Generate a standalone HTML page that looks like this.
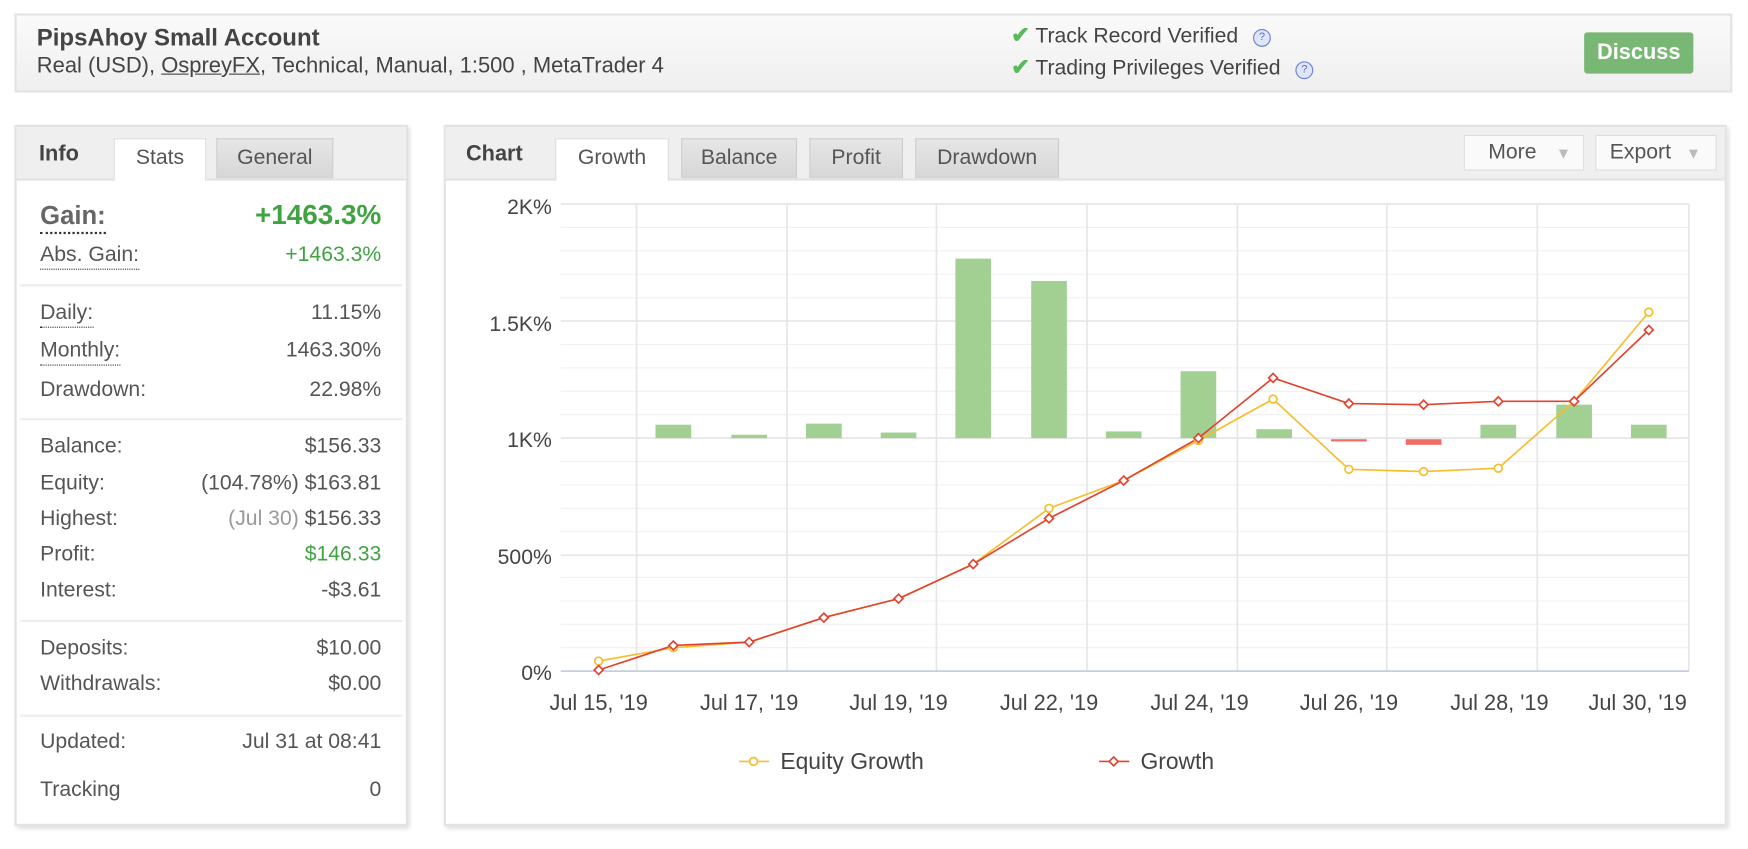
<!DOCTYPE html>
<html><head><meta charset="utf-8"><style>
html,body{margin:0;padding:0;background:#fff;overflow:hidden;}
body{width:1748px;height:849px;}
#w{position:absolute;left:0;top:0;width:1568px;height:762px;transform:scale(1.11480);transform-origin:0 0;font-family:"Liberation Sans",Arial,sans-serif;color:#444;}
.a{position:absolute;white-space:nowrap;}
.box{position:absolute;border:2px solid #e3e3e3;box-sizing:border-box;}
.tab{position:absolute;box-sizing:border-box;font-size:19px;text-align:center;line-height:34px;color:#555;}
.ti{background:#fff;border:1px solid #ddd;border-bottom:none;}
.tg{background:linear-gradient(#e6e6e6,#d6d6d6);border:1px solid #ccc;border-bottom:none;}
.row{position:absolute;left:36px;width:306px;font-size:19px;color:#555;}
.row .v{position:absolute;right:0;top:0;}
.dl{border-bottom:1px dotted #333;}
.sep{position:absolute;left:18px;width:343px;height:2px;background:#eee;}
.btn{position:absolute;box-sizing:border-box;border:1px solid #ddd;background:#fafafa;font-size:19px;color:#555;line-height:30px;}
.q{display:inline-block;width:14px;height:14px;border-radius:50%;border:1px solid #6a7fd0;color:#5a6fc0;font-size:10px;line-height:14px;text-align:center;vertical-align:2px;margin-left:8px;background:#dfe6fb}
</style></head><body><div id="w">

<div class="box" style="left:13px;top:12px;width:1541px;height:71px;background:linear-gradient(#fafafa,#efefef);"></div>
<div class="a" style="left:33px;top:22px;font-size:21.5px;font-weight:bold;color:#444;">PipsAhoy Small Account</div>
<div class="a" style="left:33px;top:48px;font-size:19.7px;color:#444;">Real (USD), <span style="text-decoration:underline">OspreyFX</span>, Technical, Manual, 1:500 , MetaTrader 4</div>
<div class="a" style="left:907px;top:19px;font-size:19px;color:#444;"><span style="color:#5cb85c;font-weight:bold;font-size:20px">✔</span> Track Record Verified <span class="q">?</span></div>
<div class="a" style="left:907px;top:48px;font-size:19px;color:#444;"><span style="color:#5cb85c;font-weight:bold;font-size:20px">✔</span> Trading Privileges Verified <span class="q">?</span></div>
<div class="a" style="left:1421px;top:29px;width:98px;height:37px;background:#78b874;border-radius:3px;color:#fff;font-weight:bold;font-size:19.5px;text-align:center;line-height:37px;">Discuss</div>

<!-- left panel -->
<div class="box" style="left:13px;top:112px;width:353px;height:629px;box-shadow:2px 2px 4px #ddd;"></div>
<div class="a" style="left:15px;top:114px;width:349px;height:46px;background:#efefef;border-bottom:2px solid #e3e3e3;"></div>
<div class="a" style="left:35px;top:127px;font-size:19.5px;font-weight:bold;color:#444;">Info</div>
<div class="tab ti" style="left:102px;top:124px;width:83px;height:38px;">Stats</div>
<div class="tab tg" style="left:194px;top:124px;width:105px;height:36px;">General</div>

<div class="row" style="top:180px;font-size:23px;font-weight:bold;color:#666;"><span class="dl" style="border-bottom-width:2px;padding-bottom:2px">Gain:</span><span class="v" style="color:#3fa342;font-size:25px;top:-1px">+1463.3%</span></div>
<div class="row" style="top:218px;"><span class="dl" style="padding-bottom:2px">Abs. Gain:</span><span class="v" style="color:#3fa342">+1463.3%</span></div>
<div class="sep" style="top:255px"></div>
<div class="row" style="top:270px;"><span class="dl" style="padding-bottom:2px">Daily:</span><span class="v">11.15%</span></div>
<div class="row" style="top:304px;"><span class="dl" style="padding-bottom:2px">Monthly:</span><span class="v">1463.30%</span></div>
<div class="row" style="top:339px;">Drawdown:<span class="v">22.98%</span></div>
<div class="sep" style="top:375px"></div>
<div class="row" style="top:390px;">Balance:<span class="v">$156.33</span></div>
<div class="row" style="top:423px;">Equity:<span class="v">(104.78%) $163.81</span></div>
<div class="row" style="top:455px;">Highest:<span class="v"><span style="color:#999">(Jul 30)</span> $156.33</span></div>
<div class="row" style="top:487px;">Profit:<span class="v" style="color:#3fa342">$146.33</span></div>
<div class="row" style="top:519px;">Interest:<span class="v">-$3.61</span></div>
<div class="sep" style="top:556px"></div>
<div class="row" style="top:571px;">Deposits:<span class="v">$10.00</span></div>
<div class="row" style="top:603px;">Withdrawals:<span class="v">$0.00</span></div>
<div class="sep" style="top:641px"></div>
<div class="row" style="top:655px;">Updated:<span class="v">Jul 31 at 08:41</span></div>
<div class="row" style="top:698px;">Tracking<span class="v">0</span></div>

<!-- chart panel -->
<div class="box" style="left:398px;top:112px;width:1151px;height:629px;box-shadow:2px 2px 4px #ddd;"></div>
<div class="a" style="left:400px;top:114px;width:1147px;height:46px;background:#efefef;border-bottom:2px solid #e3e3e3;"></div>
<div class="a" style="left:418px;top:127px;font-size:19.5px;font-weight:bold;color:#444;">Chart</div>
<div class="tab ti" style="left:498px;top:124px;width:102px;height:38px;">Growth</div>
<div class="tab tg" style="left:611px;top:124px;width:104px;height:36px;">Balance</div>
<div class="tab tg" style="left:726px;top:124px;width:84px;height:36px;">Profit</div>
<div class="tab tg" style="left:821px;top:124px;width:129px;height:36px;">Drawdown</div>
<div class="btn" style="left:1313px;top:121px;width:108px;height:32px;padding-left:21px;">More <span style="color:#bbb;font-size:14px;margin-left:12px">▼</span></div>
<div class="btn" style="left:1431px;top:121px;width:109px;height:32px;padding-left:12px;">Export <span style="color:#bbb;font-size:14px;margin-left:8px">▼</span></div>

<svg class="a" style="left:0;top:0" width="1568" height="762" font-family="Liberation Sans, Arial, sans-serif">
<g stroke="#f0f0f0" stroke-width="1">
<line x1="503" x2="1515" y1="204" y2="204"/><line x1="503" x2="1515" y1="225" y2="225"/><line x1="503" x2="1515" y1="246" y2="246"/><line x1="503" x2="1515" y1="267" y2="267"/>
<line x1="503" x2="1515" y1="309" y2="309"/><line x1="503" x2="1515" y1="330" y2="330"/><line x1="503" x2="1515" y1="351" y2="351"/><line x1="503" x2="1515" y1="372" y2="372"/>
<line x1="503" x2="1515" y1="414" y2="414"/><line x1="503" x2="1515" y1="435" y2="435"/><line x1="503" x2="1515" y1="456" y2="456"/><line x1="503" x2="1515" y1="477" y2="477"/>
<line x1="503" x2="1515" y1="518" y2="518"/><line x1="503" x2="1515" y1="539" y2="539"/><line x1="503" x2="1515" y1="560" y2="560"/><line x1="503" x2="1515" y1="581" y2="581"/>
</g>
<g stroke="#e6e6e6" stroke-width="1.5">
<line x1="503" x2="1515" y1="183" y2="183"/><line x1="503" x2="1515" y1="288" y2="288"/><line x1="503" x2="1515" y1="393" y2="393"/><line x1="503" x2="1515" y1="498" y2="498"/>
<line x1="571" x2="571" y1="183" y2="602"/><line x1="706" x2="706" y1="183" y2="602"/><line x1="840" x2="840" y1="183" y2="602"/><line x1="975" x2="975" y1="183" y2="602"/><line x1="1110" x2="1110" y1="183" y2="602"/><line x1="1244" x2="1244" y1="183" y2="602"/><line x1="1379" x2="1379" y1="183" y2="602"/><line x1="1515" x2="1515" y1="183" y2="602"/>
</g>
<line x1="503" x2="1515" y1="602" y2="602" stroke="#c5cde0" stroke-width="1.5"/>
<g fill="#a2cf92">
<rect x="588" y="381" width="32" height="12"/><rect x="656" y="390" width="32" height="3"/><rect x="723" y="380" width="32" height="13"/><rect x="790" y="388" width="32" height="5"/>
<rect x="857" y="232" width="32" height="161"/><rect x="925" y="252" width="32" height="141"/><rect x="992" y="387" width="32" height="6"/><rect x="1059" y="333" width="32" height="60"/>
<rect x="1127" y="385" width="32" height="8"/><rect x="1328" y="381" width="32" height="12"/><rect x="1396" y="363" width="32" height="30"/><rect x="1463" y="381" width="32" height="12"/>
</g>
<g fill="#ee6b66"><rect x="1194" y="394" width="32" height="2"/><rect x="1261" y="394" width="32" height="5"/></g>
<polyline fill="none" stroke="#f6bd2c" stroke-width="1.5" points="537,593 604,581 672,576 739,554 806,537 873,506 941,456 1008,431 1075,395 1142,358 1210,421 1277,423 1344,420 1412,360 1479,280"/>
<polyline fill="none" stroke="#e2432f" stroke-width="1.5" points="537,601 604,579 672,576 739,554 806,537 873,506 941,465 1008,431 1075,393 1142,339 1210,362 1277,363 1344,360 1412,360 1479,296"/>
<g fill="#fff" stroke="#f6bd2c" stroke-width="1.5">
<circle cx="537" cy="593" r="3.5"/><circle cx="604" cy="581" r="3.5"/><circle cx="941" cy="456" r="3.5"/><circle cx="1075" cy="395" r="3.5"/><circle cx="1142" cy="358" r="3.5"/><circle cx="1210" cy="421" r="3.5"/><circle cx="1277" cy="423" r="3.5"/><circle cx="1344" cy="420" r="3.5"/><circle cx="1479" cy="280" r="3.5"/>
</g>
<g fill="#fff" stroke="#e2432f" stroke-width="1.5">
<path d="M537 597l4 4-4 4-4-4z"/><path d="M604 575l4 4-4 4-4-4z"/><path d="M672 572l4 4-4 4-4-4z"/><path d="M739 550l4 4-4 4-4-4z"/><path d="M806 533l4 4-4 4-4-4z"/><path d="M873 502l4 4-4 4-4-4z"/><path d="M941 461l4 4-4 4-4-4z"/><path d="M1008 427l4 4-4 4-4-4z"/><path d="M1075 389l4 4-4 4-4-4z"/><path d="M1142 335l4 4-4 4-4-4z"/><path d="M1210 358l4 4-4 4-4-4z"/><path d="M1277 359l4 4-4 4-4-4z"/><path d="M1344 356l4 4-4 4-4-4z"/><path d="M1412 356l4 4-4 4-4-4z"/><path d="M1479 292l4 4-4 4-4-4z"/>
</g>
<g font-size="19" fill="#444" text-anchor="end">
<text x="495" y="192">2K%</text><text x="495" y="297">1.5K%</text><text x="495" y="401">1K%</text><text x="495" y="506">500%</text><text x="495" y="610">0%</text>
</g>
<g font-size="19.5" fill="#444" text-anchor="middle">
<text x="537" y="637">Jul 15, '19</text><text x="672" y="637">Jul 17, '19</text><text x="806" y="637">Jul 19, '19</text><text x="941" y="637">Jul 22, '19</text><text x="1076" y="637">Jul 24, '19</text><text x="1210" y="637">Jul 26, '19</text><text x="1345" y="637">Jul 28, '19</text><text x="1469" y="637">Jul 30, '19</text>
</g>
<line x1="663" x2="690" y1="683" y2="683" stroke="#f6bd2c" stroke-width="1.5"/><circle cx="676" cy="683" r="3.5" fill="#fff" stroke="#f6bd2c" stroke-width="1.5"/>
<text x="700" y="690" font-size="20.5" fill="#444">Equity Growth</text>
<line x1="986" x2="1013" y1="683" y2="683" stroke="#e2432f" stroke-width="1.5"/><path d="M999 679l4 4-4 4-4-4z" fill="#fff" stroke="#e2432f" stroke-width="1.5"/>
<text x="1023" y="690" font-size="20.5" fill="#444">Growth</text>
</svg>
</div></body></html>
